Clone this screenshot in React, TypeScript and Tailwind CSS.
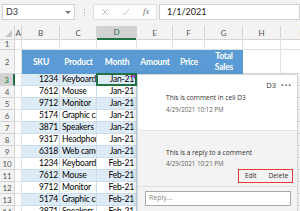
import React from 'react';

const cols = ['A', 'B', 'C', 'D', 'E', 'F', 'G', 'H', 'I'];

const rows: [string, string, string][] = [
  ['1234', 'Keyboard', 'Jan-21'],
  ['7612', 'Mouse', 'Jan-21'],
  ['9712', 'Monitor', 'Jan-21'],
  ['5174', 'Graphic card', 'Jan-21'],
  ['3871', 'Speakers', 'Jan-21'],
  ['9317', 'Headphones', 'Jan-21'],
  ['6318', 'Web camera', 'Jan-21'],
  ['1234', 'Keyboard', 'Feb-21'],
  ['7612', 'Mouse', 'Feb-21'],
  ['9712', 'Monitor', 'Feb-21'],
  ['5174', 'Graphic card', 'Feb-21'],
  ['3871', 'Speakers', 'Feb-21'],
];

const gridCols = 'grid grid-cols-[15px_7px_38px_37px_40px_36px_32px_38px_38px_40px]';
const line = 'border-r border-b border-[#e1e1e1]';

const RowHead: React.FC<{ n: number; active?: boolean; h: string }> = ({ n, active, h }) => (
  <div
    className={`${h} flex items-center justify-center text-[8px] border-b border-[#d4d4d4] ${
      active
        ? 'bg-[#d2d2d2] text-[#217346] border-r-2 border-r-[#217346]'
        : 'bg-[#f3f3f3] text-[#555] border-r border-r-[#d4d4d4]'
    }`}
  >
    {n}
  </div>
);

const App: React.FC = () => {
  return (
    <div className="relative w-[300px] h-[211px] overflow-hidden bg-white font-['Lato',sans-serif] text-[8.5px] tracking-[-0.2px] text-black">
      {/* Formula bar */}
      <div className="h-[26px] bg-[#f3f3f3] flex items-start pt-[4px] pl-[2px] tracking-normal">
        <div className="w-[73px] h-[16px] bg-white border border-[#d0d0d0] flex items-center justify-between px-[3px]">
          <span className="text-[9px] text-[#333]">D3</span>
          <span className="w-0 h-0 border-l-[3px] border-r-[3px] border-t-[3px] border-l-transparent border-r-transparent border-t-[#777]" />
        </div>
        <div className="w-[18px] h-[16px] flex flex-col items-center justify-center gap-[2px]">
          <span className="w-[1px] h-[1px] bg-[#aaa]" />
          <span className="w-[1px] h-[1px] bg-[#aaa]" />
          <span className="w-[1px] h-[1px] bg-[#aaa]" />
        </div>
        <div className="w-[64px] h-[16px] bg-white border border-[#e0e0e0] flex items-center">
          <svg width="8" height="8" viewBox="0 0 8 8" className="ml-[7px]">
            <path d="M1 1L7 7M7 1L1 7" stroke="#c4c4c4" strokeWidth="1" />
          </svg>
          <svg width="9" height="8" viewBox="0 0 9 8" className="ml-[12px]">
            <path d="M1 4.5L3.5 7L8 1" stroke="#c4c4c4" strokeWidth="1" fill="none" />
          </svg>
          <span className="ml-[13px] italic text-[9px] font-['Liberation_Serif',serif] text-[#777]">fx</span>
        </div>
        <div className="flex-1 h-[16px] bg-white border border-[#d0d0d0] ml-[2px] flex items-center pl-[7px]">
          <span className="text-[9px] text-[#222]">1/1/2021</span>
        </div>
      </div>

      {/* Column headers */}
      <div className={`${gridCols} h-[12px]`}>
        <div className="bg-[#f3f3f3] border-r border-b border-[#d4d4d4] relative">
          <span className="absolute right-[2px] bottom-[2px] w-0 h-0 border-b-[7px] border-l-[7px] border-l-transparent border-b-[#c8c8c8]" />
        </div>
        {cols.map((c) => (
          <div
            key={c}
            className={`flex items-center justify-center text-[8px] border-r border-[#d4d4d4] ${
              c === 'D'
                ? 'bg-[#d2d2d2] text-[#217346] border-b-2 border-b-[#217346]'
                : 'bg-[#f3f3f3] text-[#555] border-b border-b-[#d4d4d4]'
            }`}
          >
            {c}
          </div>
        ))}
      </div>

      {/* Row 1 */}
      <div className={`${gridCols} h-[12px]`}>
        <RowHead n={1} h="h-[12px]" />
        {cols.map((c) => (
          <div key={c} className={line} />
        ))}
      </div>

      {/* Row 2: table header */}
      <div className={`${gridCols} h-[24px]`}>
        <RowHead n={2} h="h-[24px]" />
        <div className={line} />
        {['SKU', 'Product', 'Month', 'Amount', 'Price', 'Total Sales'].map((t) => (
          <div
            key={t}
            className="bg-[#5b9bd5] text-white font-bold flex items-center justify-center text-center leading-[11px] px-[1px]"
          >
            {t === 'Total Sales' ? (
              <span>
                Total
                <br />
                Sales
              </span>
            ) : (
              t
            )}
          </div>
        ))}
        <div className={line} />
        <div className={line} />
      </div>

      {/* Data rows */}
      {rows.map(([sku, product, month], i) => {
        const band = i % 2 === 0 ? 'bg-[#ddebf7]' : 'bg-white';
        const cell = `${band} border-r border-b border-[#c9dcf0] h-[12px] flex items-center`;
        return (
          <div key={i} className={`${gridCols} h-[12px]`}>
            <RowHead n={i + 3} active={i === 0} h="h-[12px]" />
            <div className={line} />
            <div className={`${cell} justify-end pr-[1px]`}>{sku}</div>
            <div className={`${cell} pl-[2px] overflow-hidden whitespace-nowrap`}>{product}</div>
            <div className={`${cell} justify-end pr-[2px] relative`}>
              {month}
              {i === 0 && (
                <>
                  <span className="absolute -inset-[1px] border-2 border-[#217346]" />
                  <span className="absolute top-[1px] right-[1px] w-0 h-0 border-l-[4px] border-t-[4px] border-l-transparent border-t-[#b146c2]" />
                </>
              )}
            </div>
            <div className={cell} />
            <div className={cell} />
            <div className={cell} />
            <div className={line} />
            <div className={line} />
          </div>
        );
      })}

      {/* Comment card */}
      <div className="absolute left-[137px] top-[74px] w-[161px] h-[140px] bg-white border border-[#d6d6d6] shadow-[0_2px_6px_rgba(0,0,0,0.18)] flex flex-col font-['Open_Sans',sans-serif] tracking-normal text-[#323130]">
        <div className="h-[55px] bg-white flex flex-col">
          <div className="flex items-center justify-end h-[16px] pt-[6px] pr-[5px] gap-[5px]">
            <span className="text-[7.5px]">D3</span>
            <span className="text-[7px] tracking-[1px] text-[#555]">•••</span>
          </div>
          <div className="pl-[28px] pt-[1px] text-[6.6px] leading-[12px]">
            <div>This is comment in cell D3</div>
            <div className="text-[#605e5c] text-[6.2px]">4/29/2021 10:12 PM</div>
          </div>
        </div>
        <div className="h-[56px] bg-[#f3f3f3] border-t border-[#e6e6e6] flex flex-col">
          <div className="pl-[28px] pt-[16px] text-[6.6px] leading-[11px]">
            <div>This is a reply to a comment</div>
            <div className="text-[#605e5c] text-[6.2px]">4/29/2021 10:21 PM</div>
          </div>
          <div className="flex justify-end pr-[4px]">
            <div className="border-[1.5px] border-[#e53935] h-[14px] w-[55px] flex items-center justify-between pl-[6px] pr-[3.5px] text-[6.6px]">
              <span>Edit</span>
              <span>Delete</span>
            </div>
          </div>
        </div>
        <div className="flex-1 bg-[#f3f3f3] border-t border-[#e0e0e0] pl-[7px] pt-[4px]">
          <div className="w-[146px] h-[15px] bg-white border border-[#a8a8a8] flex items-center pl-[3px] text-[7px] text-[#8a8886]">
            Reply...
          </div>
        </div>
      </div>
    </div>
  );
};

export default App;
